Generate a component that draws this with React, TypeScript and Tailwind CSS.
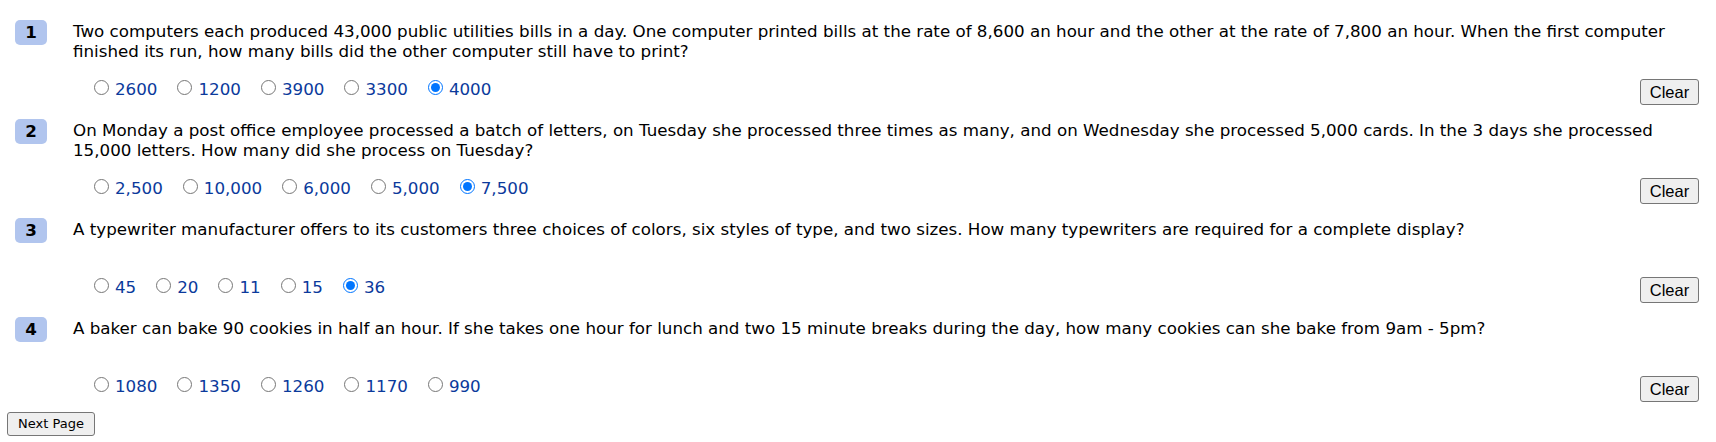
import React from 'react';

interface Question {
  id: number;
  text: string;
  options: string[];
  selected: number | null;
}

const questions: Question[] = [
  {
    id: 1,
    text: 'Two computers each produced 43,000 public utilities bills in a day. One computer printed bills at the rate of 8,600 an hour and the other at the rate of 7,800 an hour. When the first computer finished its run, how many bills did the other computer still have to print?',
    options: ['2600', '1200', '3900', '3300', '4000'],
    selected: 4,
  },
  {
    id: 2,
    text: 'On Monday a post office employee processed a batch of letters, on Tuesday she processed three times as many, and on Wednesday she processed 5,000 cards. In the 3 days she processed 15,000 letters. How many did she process on Tuesday?',
    options: ['2,500', '10,000', '6,000', '5,000', '7,500'],
    selected: 4,
  },
  {
    id: 3,
    text: 'A typewriter manufacturer offers to its customers three choices of colors, six styles of type, and two sizes. How many typewriters are required for a complete display?',
    options: ['45', '20', '11', '15', '36'],
    selected: 4,
  },
  {
    id: 4,
    text: 'A baker can bake 90 cookies in half an hour. If she takes one hour for lunch and two 15 minute breaks during the day, how many cookies can she bake from 9am - 5pm?',
    options: ['1080', '1350', '1260', '1170', '990'],
    selected: null,
  },
];

const QuestionBlock: React.FC<{ q: Question }> = ({ q }) => (
  <div className="mb-[14px]">
    <div className="flex">
      <div className="ml-[15px] w-[32px] h-[25px] shrink-0 rounded-[5px] bg-[#b1c5ee] flex items-center justify-center font-bold text-[16.7px] text-black">
        {q.id}
      </div>
      <div className="ml-[26px] mr-[17px] mt-[1px] flex-1 min-h-[40px] text-[16.7px] leading-[20px] text-black">
        {q.text}
      </div>
    </div>
    <div className="mt-[18px] flex items-start justify-between pr-[17px]">
      <div className="flex items-start pl-[94px] text-[16.7px] leading-[20px] text-[#0b3a9c]">
        {q.options.map((opt, i) => (
          <label key={opt} className="flex items-start mr-[20px]">
            <input
              type="radio"
              name={`q${q.id}`}
              defaultChecked={q.selected === i}
              className="m-0 mt-[1px] w-[15px] h-[15px]"
            />
            <span className="ml-[6px]">{opt}</span>
          </label>
        ))}
      </div>
      <button className="h-[26px] w-[59px] rounded-[3px] border border-[#767676] bg-[#efefef] text-[16.5px] text-black font-['Liberation_Sans',_Arial,_sans-serif]">
        Clear
      </button>
    </div>
  </div>
);

export default function App() {
  return (
    <div className="w-[1716px] h-[442px] bg-white pt-[20px] font-['DejaVu_Sans',_Verdana,_sans-serif]">
      {questions.map((q) => (
        <QuestionBlock key={q.id} q={q} />
      ))}
      <button className="block -mt-[4px] ml-[7px] h-[24px] w-[88px] rounded-[3px] border border-[#767676] bg-[#efefef] text-[13px] text-black">
        Next Page
      </button>
    </div>
  );
}
